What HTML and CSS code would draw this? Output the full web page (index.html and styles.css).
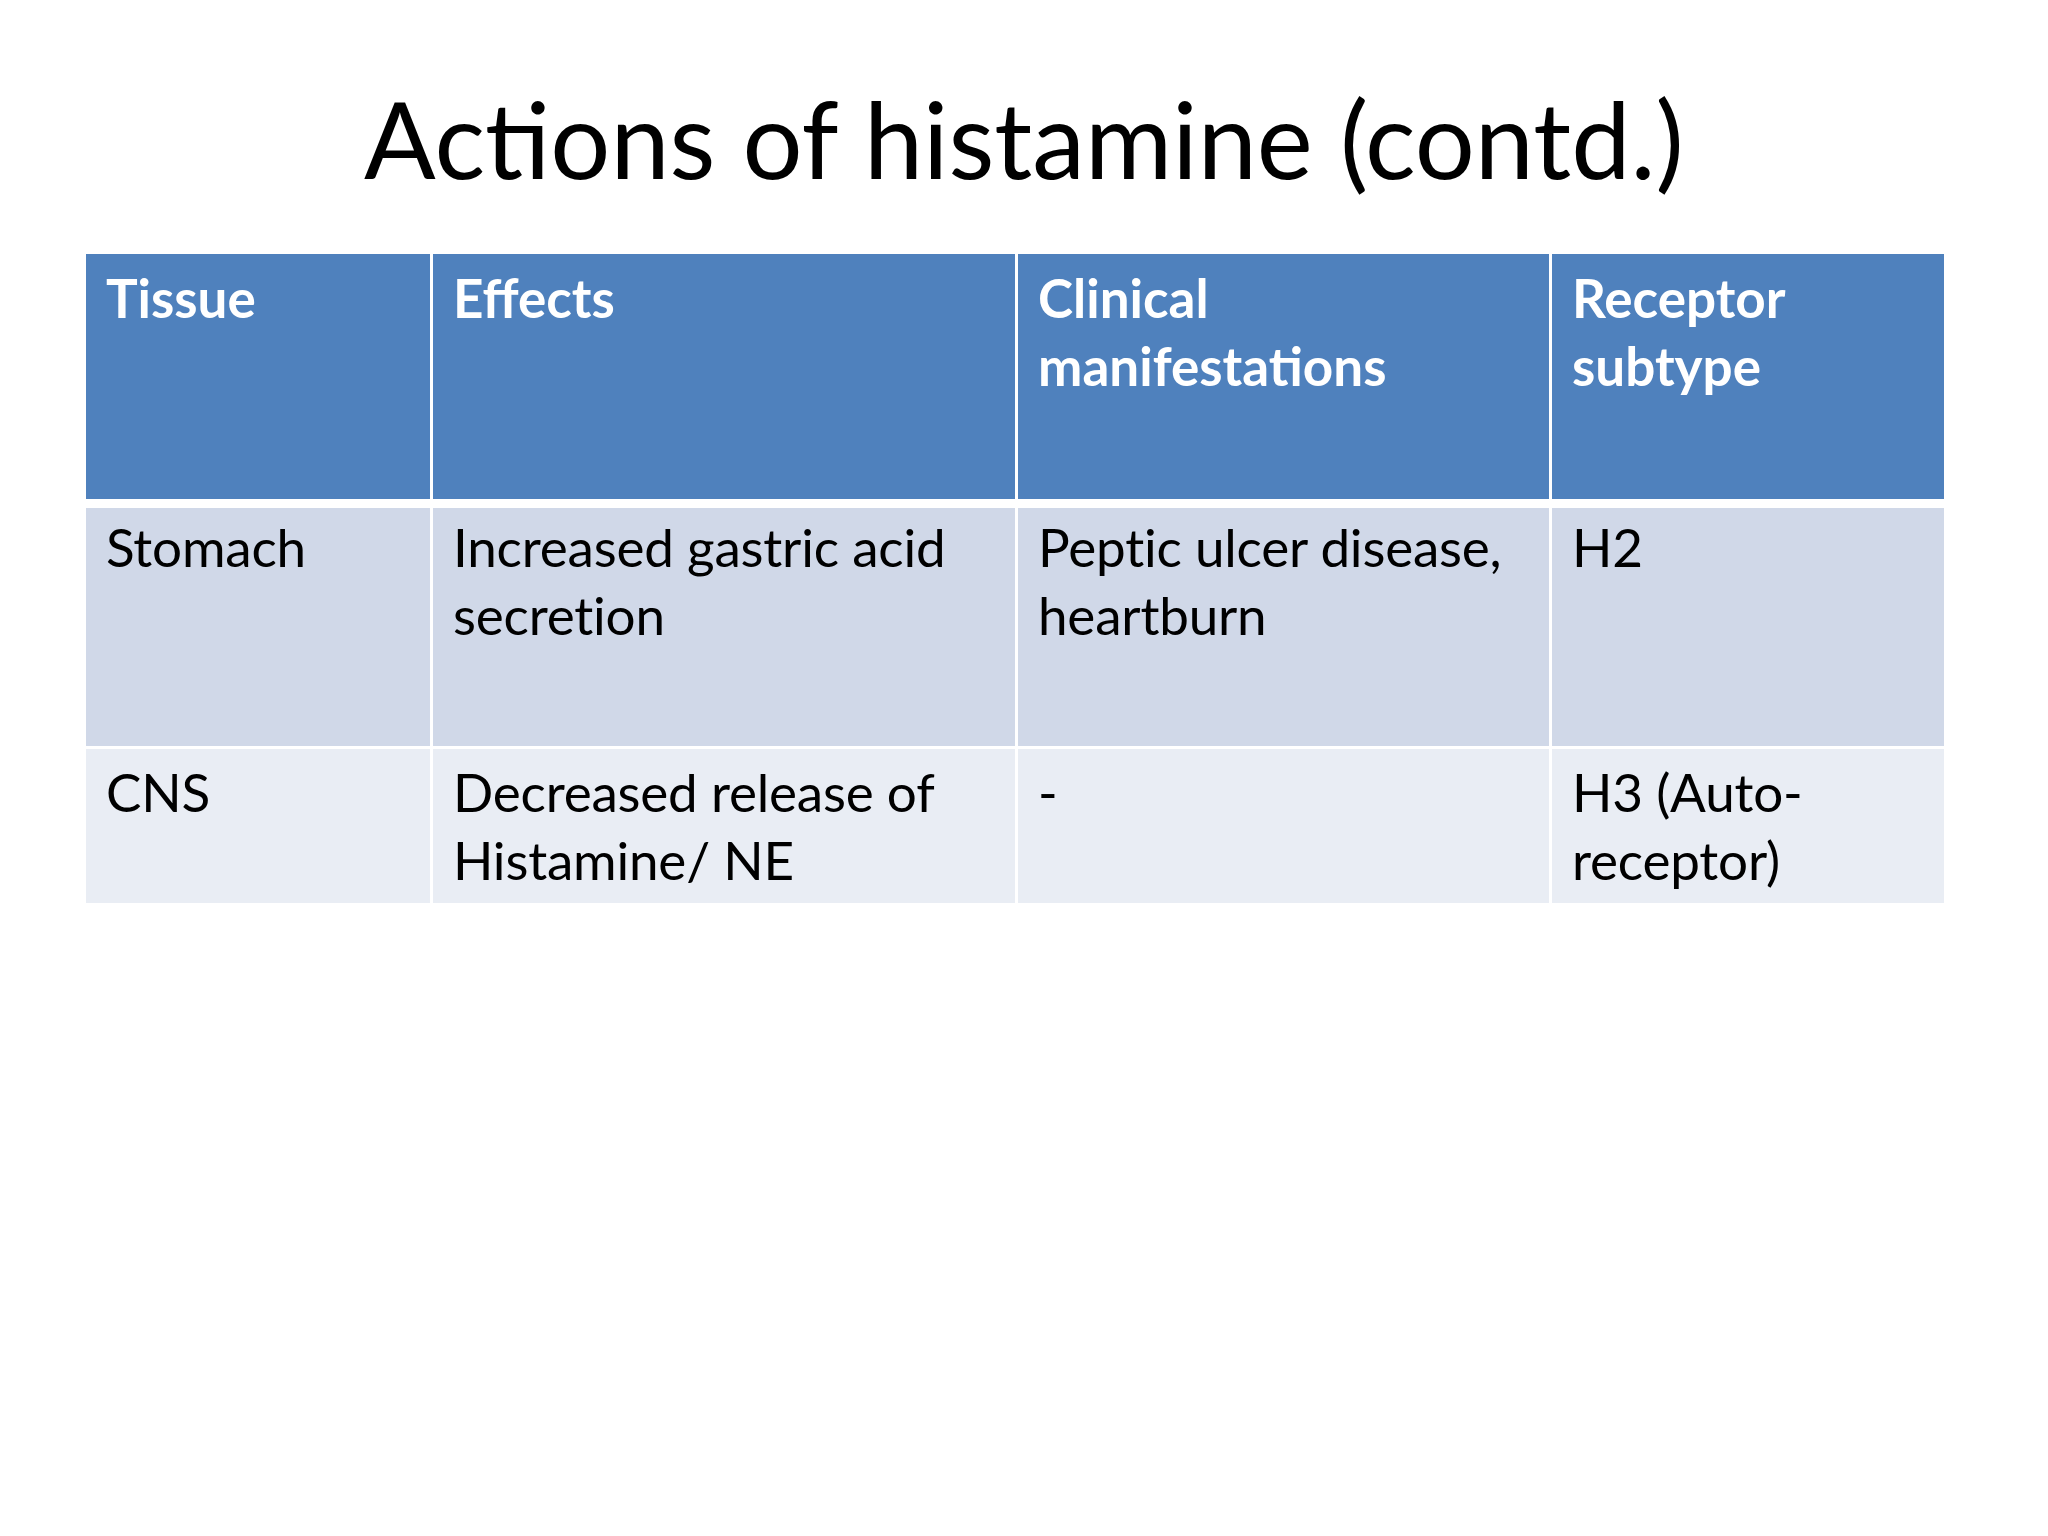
FILE: index.html
```html
<!DOCTYPE html>
<html lang="en">
<head>
<meta charset="utf-8">
<title>Actions of histamine (contd.)</title>
<link rel="stylesheet" href="styles.css">
</head>
<body>
<div class="slide">
  <h1 class="title">Actions of histamine (contd.)</h1>
  <div class="table">
    <div class="cell head">Tissue</div>
    <div class="cell head">Effects</div>
    <div class="cell head">Clinical manifestations</div>
    <div class="cell head">Receptor subtype</div>

    <div class="cell odd">Stomach</div>
    <div class="cell odd">Increased gastric acid secretion</div>
    <div class="cell odd">Peptic ulcer disease, heartburn</div>
    <div class="cell odd">H2</div>

    <div class="cell even">CNS</div>
    <div class="cell even">Decreased release of Histamine/ NE</div>
    <div class="cell even">-</div>
    <div class="cell even">H3 (Auto-receptor)</div>
  </div>
</div>
</body>
</html>
```

FILE: styles.css
```css
html, body {
  margin: 0;
  padding: 0;
  background: #ffffff;
}

.slide {
  width: 2048px;
  height: 1536px;
  box-sizing: border-box;
  padding: 0 0 0 86px;
  font-family: Lato, "Liberation Sans", sans-serif;
  color: #000000;
}

.title {
  margin: 0 0 0 -86px;
  padding-top: 74px;
  height: 254px;
  box-sizing: border-box;
  font-weight: 400;
  font-size: 106px;
  line-height: 128px;
  text-align: center;
  letter-spacing: 0;
}

.table {
  width: 1858px;
  display: grid;
  grid-template-columns: 344px 582px 531px 392px;
  grid-template-rows: 251px 238px 154px;
  column-gap: 3px;
  row-gap: 3px;
}

.cell {
  box-sizing: border-box;
  padding: 6px 20px 0 20px;
  font-size: 53px;
  line-height: 68px;
  letter-spacing: -0.2px;
}

.head {
  background: #4f81bd;
  color: #ffffff;
  font-weight: 700;
  letter-spacing: 0;
  padding-top: 10px;
  margin-bottom: 6px;
}

.odd {
  background: #d0d8e8;
  padding-top: 5px;
}

.even {
  background: #e9edf4;
  padding-top: 9px;
}
```
